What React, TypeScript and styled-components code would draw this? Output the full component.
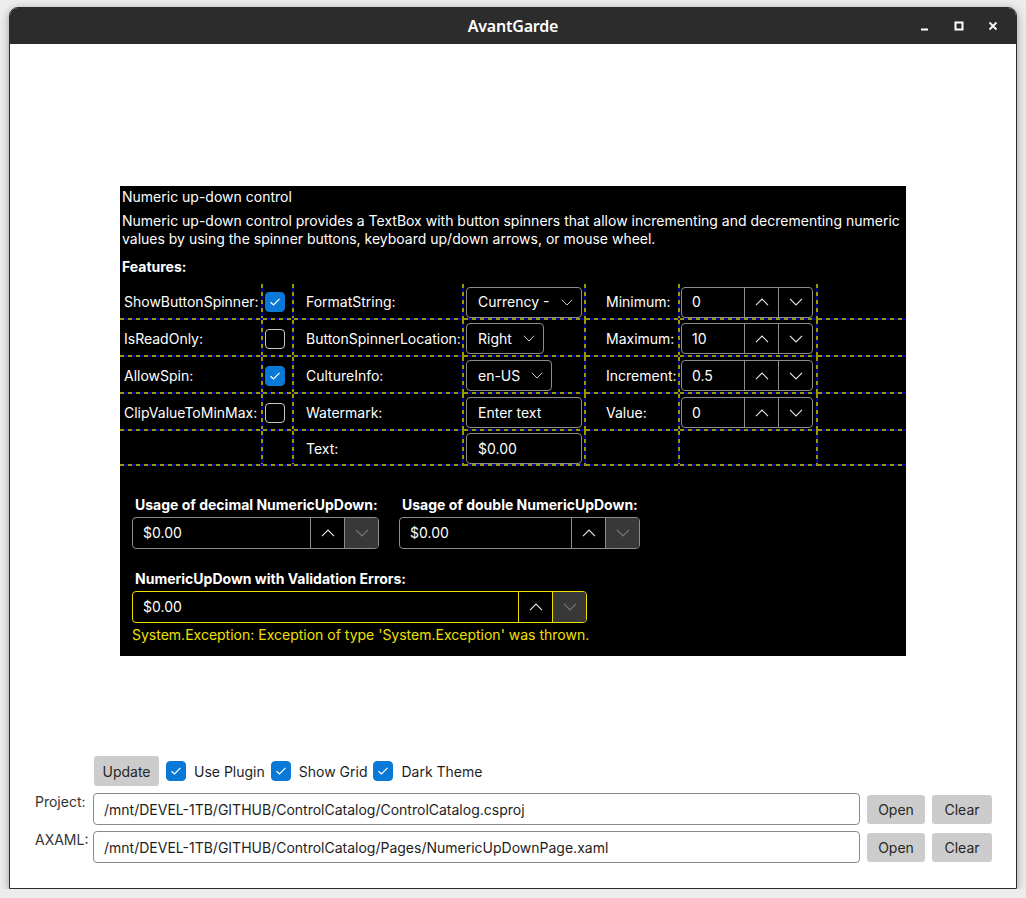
import React from "react";
import styled, { createGlobalStyle } from "styled-components";

const GlobalStyle = createGlobalStyle`
  html, body {
    margin: 0;
    padding: 0;
    background: #ececec;
  }
  body {
    font-family: Inter, "Noto Sans", sans-serif;
  }
`;

const YELLOW_LINE = "#9a9a00";
const BLUE_LINE = "#0000a0";

const Window = styled.div`
  margin: 7px 0 0 9px;
  width: 1008px;
  height: 882px;
  box-sizing: border-box;
  display: flex;
  flex-direction: column;
  border: 1px solid #2c2c2c;
  border-radius: 9px 9px 0 0;
  overflow: hidden;
  box-shadow: 0 2px 9px rgba(0, 0, 0, 0.35);
`;

const TitleBar = styled.div`
  height: 36px;
  flex: none;
  background: #2c2c2c;
  display: grid;
  grid-template-columns: 1fr auto 1fr;
  align-items: center;
`;

const Title = styled.div`
  grid-column: 2;
  color: #ffffff;
  font-family: "Noto Sans", sans-serif;
  font-weight: 600;
  font-size: 16px;
  letter-spacing: -0.2px;
`;

const WinControls = styled.div`
  grid-column: 3;
  justify-self: end;
  display: flex;
  align-items: center;
  padding-right: 6px;
`;

const WinButton = styled.div`
  width: 34px;
  height: 24px;
  display: flex;
  align-items: center;
  justify-content: center;
`;

const Content = styled.div`
  flex: 1;
  background: #ffffff;
  display: flex;
  flex-direction: column;
`;

const Preview = styled.div`
  flex: 1;
  display: flex;
  justify-content: center;
  align-items: flex-start;
  padding-top: 142px;
`;

const Panel = styled.div`
  width: 786px;
  height: 470px;
  background: #000000;
  color: #ffffff;
  font-size: 14px;
  line-height: 18px;
  box-sizing: border-box;
  padding-top: 2px;
`;

const Heading = styled.div`
  padding-left: 2px;
`;

const Description = styled.div`
  padding-left: 2px;
  margin-top: 6px;
`;

const FeaturesLabel = styled.div`
  padding-left: 2px;
  margin-top: 10px;
  font-weight: 700;
`;

const FeatureGrid = styled.div`
  margin-top: 8px;
  display: grid;
  grid-template-columns: 143px 31px 170px 122px 94px 138px 88px;
  grid-template-rows: 36px 37px 37px 37px 35px;
`;

const Cell = styled.div<{ $pl: number; $noRight?: boolean }>`
  display: flex;
  align-items: center;
  padding-left: ${(p) => p.$pl}px;
  white-space: nowrap;
  overflow: hidden;
  background:
    repeating-linear-gradient(90deg, ${YELLOW_LINE} 0 4px, ${BLUE_LINE} 4px 8px) left bottom / 100% 2px no-repeat
    ${(p) =>
      p.$noRight
        ? ""
        : `, repeating-linear-gradient(180deg, ${YELLOW_LINE} 0 4px, ${BLUE_LINE} 4px 8px) right top / 2px 100% no-repeat`};
`;

const CheckBoxBox = styled.div<{ $checked: boolean; $light?: boolean }>`
  width: 20px;
  height: 20px;
  box-sizing: border-box;
  border-radius: 4px;
  flex: none;
  display: flex;
  align-items: center;
  justify-content: center;
  background: ${(p) => (p.$checked ? "#0a78d6" : "transparent")};
  border: 1px solid
    ${(p) => (p.$checked ? "#0a78d6" : p.$light ? "#8a8a8a" : "#c8c8c8")};
`;

const ComboBox = styled.div<{ $w: number }>`
  width: ${(p) => p.$w}px;
  height: 31px;
  box-sizing: border-box;
  border: 1px solid #8c8c8c;
  border-radius: 4px;
  display: flex;
  align-items: center;
  padding-left: 11px;
  padding-right: 8px;
  gap: 8px;
`;

const ComboText = styled.span`
  flex: 1;
  overflow: hidden;
  white-space: nowrap;
`;

const TextBox = styled.div<{ $w: number }>`
  width: ${(p) => p.$w}px;
  height: 31px;
  box-sizing: border-box;
  border: 1px solid #8c8c8c;
  border-radius: 4px;
  display: flex;
  align-items: center;
  padding-left: 11px;
`;

const SpinBox = styled.div<{ $w: number; $h: number; $error?: boolean }>`
  width: ${(p) => p.$w}px;
  height: ${(p) => p.$h}px;
  box-sizing: border-box;
  border: 1px solid ${(p) => (p.$error ? "#efe000" : "#8c8c8c")};
  border-radius: 4px;
  display: flex;
  overflow: hidden;
`;

const SpinText = styled.div`
  flex: 1;
  display: flex;
  align-items: center;
  padding-left: 10px;
`;

const SpinButton = styled.div<{ $dim?: boolean; $error?: boolean }>`
  width: 33px;
  flex: none;
  border-left: 1px solid ${(p) => (p.$error ? "#efe000" : "#8c8c8c")};
  background: ${(p) => (p.$dim ? "#383838" : "transparent")};
  display: flex;
  align-items: center;
  justify-content: center;
`;

const Usage = styled.div`
  padding: 30px 0 0 12px;
`;

const UsageRow = styled.div`
  display: flex;
  gap: 20px;
`;

const Field = styled.div<{ $mt?: number }>`
  display: flex;
  flex-direction: column;
  margin-top: ${(p) => p.$mt ?? 0}px;
`;

const FieldLabel = styled.div`
  font-weight: 700;
  padding-left: 3px;
  margin-bottom: 3px;
`;

const ErrorText = styled.div`
  color: #efe000;
  margin-top: 3px;
`;

const Toolbar = styled.div`
  display: grid;
  grid-template-columns: 51px 1fr auto auto;
  column-gap: 7px;
  row-gap: 6px;
  padding: 0 24px 25px 25px;
  align-items: center;
  font-size: 14px;
  color: #1e1e1e;
`;

const ToolRow = styled.div`
  grid-column: 2 / 5;
  display: flex;
  align-items: center;
  margin-left: 1px;
  margin-bottom: 1px;
`;

const CheckOption = styled.div`
  display: flex;
  align-items: center;
  gap: 8px;
  margin-left: 7px;
  margin-right: -1px;
`;

const GreyButton = styled.div<{ $w: number; $h: number }>`
  width: ${(p) => p.$w}px;
  height: ${(p) => p.$h}px;
  background: #cccccc;
  border-radius: 3px;
  display: flex;
  align-items: center;
  justify-content: center;
  color: #262626;
`;

const PathLabel = styled.div`
  align-self: start;
  white-space: nowrap;
  color: #333333;
`;

const PathBox = styled.div`
  height: 32px;
  box-sizing: border-box;
  border: 1px solid #8a8a8a;
  border-radius: 4px;
  display: flex;
  align-items: center;
  padding-left: 10px;
  white-space: nowrap;
  overflow: hidden;
`;

const Chevron = ({ up, color, w = 14 }: { up?: boolean; color: string; w?: number }) => (
  <svg width={w} height={w / 2 + 1} viewBox="0 0 14 8" fill="none">
    <polyline
      points={up ? "1,7.2 7,1 13,7.2" : "1,0.8 7,7 13,0.8"}
      stroke={color}
      strokeWidth={1.1}
    />
  </svg>
);

const CheckBox = ({ checked, light }: { checked: boolean; light?: boolean }) => (
  <CheckBoxBox $checked={checked} $light={light}>
    {checked && (
      <svg width="12" height="10" viewBox="0 0 12 10" fill="none">
        <polyline points="1.5,5.2 4.5,8 10.5,1.8" stroke="#ffffff" strokeWidth={1.2} />
      </svg>
    )}
  </CheckBoxBox>
);

const Spinner = ({
  value,
  w,
  h,
  dimDown,
  error,
}: {
  value: string;
  w: number;
  h: number;
  dimDown?: boolean;
  error?: boolean;
}) => (
  <SpinBox $w={w} $h={h} $error={error}>
    <SpinText>{value}</SpinText>
    <SpinButton $error={error}>
      <Chevron up color="#e8e8e8" />
    </SpinButton>
    <SpinButton $error={error} $dim={dimDown}>
      <Chevron color={dimDown ? "#7a7a7a" : "#e8e8e8"} />
    </SpinButton>
  </SpinBox>
);

const Combo = ({ text, w }: { text: string; w: number }) => (
  <ComboBox $w={w}>
    <ComboText>{text}</ComboText>
    <Chevron color="#d8d8d8" w={12} />
  </ComboBox>
);

const App: React.FC = () => {
  return (
    <>
      <GlobalStyle />
      <Window>
        <TitleBar>
          <Title>AvantGarde</Title>
          <WinControls>
            <WinButton>
              <svg width="10" height="10" viewBox="0 0 10 10">
                <rect x="1" y="7.5" width="7" height="2" fill="#ffffff" />
              </svg>
            </WinButton>
            <WinButton>
              <svg width="10" height="10" viewBox="0 0 10 10">
                <rect x="1.5" y="1.5" width="7" height="7" fill="none" stroke="#ffffff" strokeWidth="2" />
              </svg>
            </WinButton>
            <WinButton>
              <svg width="10" height="10" viewBox="0 0 10 10">
                <path d="M1.5 1.5 L8.5 8.5 M8.5 1.5 L1.5 8.5" stroke="#ffffff" strokeWidth="1.8" />
              </svg>
            </WinButton>
          </WinControls>
        </TitleBar>
        <Content>
          <Preview>
            <Panel>
              <Heading>Numeric up-down control</Heading>
              <Description>
                Numeric up-down control provides a TextBox with button spinners that allow incrementing and decrementing numeric
                <br />
                values by using the spinner buttons, keyboard up/down arrows, or mouse wheel.
              </Description>
              <FeaturesLabel>Features:</FeaturesLabel>
              <FeatureGrid>
                <Cell $pl={4}>ShowButtonSpinner:</Cell>
                <Cell $pl={2}><CheckBox checked /></Cell>
                <Cell $pl={12}>FormatString:</Cell>
                <Cell $pl={2}><Combo text="Currency - C" w={116} /></Cell>
                <Cell $pl={20}>Minimum:</Cell>
                <Cell $pl={1}><Spinner value="0" w={132} h={31} /></Cell>
                <Cell $pl={0} $noRight />

                <Cell $pl={4}>IsReadOnly:</Cell>
                <Cell $pl={2}><CheckBox checked={false} /></Cell>
                <Cell $pl={12}>ButtonSpinnerLocation:</Cell>
                <Cell $pl={2}><Combo text="Right" w={78} /></Cell>
                <Cell $pl={20}>Maximum:</Cell>
                <Cell $pl={1}><Spinner value="10" w={132} h={31} /></Cell>
                <Cell $pl={0} $noRight />

                <Cell $pl={4}>AllowSpin:</Cell>
                <Cell $pl={2}><CheckBox checked /></Cell>
                <Cell $pl={12}>CultureInfo:</Cell>
                <Cell $pl={2}><Combo text="en-US" w={86} /></Cell>
                <Cell $pl={20}>Increment:</Cell>
                <Cell $pl={1}><Spinner value="0.5" w={132} h={31} /></Cell>
                <Cell $pl={0} $noRight />

                <Cell $pl={4}>ClipValueToMinMax:</Cell>
                <Cell $pl={2}><CheckBox checked={false} /></Cell>
                <Cell $pl={12}>Watermark:</Cell>
                <Cell $pl={2}><TextBox $w={116}>Enter text</TextBox></Cell>
                <Cell $pl={20}>Value:</Cell>
                <Cell $pl={1}><Spinner value="0" w={132} h={31} /></Cell>
                <Cell $pl={0} $noRight />

                <Cell $pl={4} />
                <Cell $pl={2} />
                <Cell $pl={12}>Text:</Cell>
                <Cell $pl={2}><TextBox $w={116}>$0.00</TextBox></Cell>
                <Cell $pl={20} />
                <Cell $pl={1} />
                <Cell $pl={0} $noRight />
              </FeatureGrid>
              <Usage>
                <UsageRow>
                  <Field>
                    <FieldLabel>Usage of decimal NumericUpDown:</FieldLabel>
                    <Spinner value="$0.00" w={247} h={32} dimDown />
                  </Field>
                  <Field>
                    <FieldLabel>Usage of double NumericUpDown:</FieldLabel>
                    <Spinner value="$0.00" w={241} h={32} dimDown />
                  </Field>
                </UsageRow>
                <Field $mt={21}>
                  <FieldLabel>NumericUpDown with Validation Errors:</FieldLabel>
                  <Spinner value="$0.00" w={455} h={32} dimDown error />
                  <ErrorText>System.Exception: Exception of type 'System.Exception' was thrown.</ErrorText>
                </Field>
              </Usage>
            </Panel>
          </Preview>
          <Toolbar>
            <span />
            <ToolRow>
              <GreyButton $w={65} $h={30}>Update</GreyButton>
              <CheckOption>
                <CheckBox checked light />
                <span>Use Plugin</span>
              </CheckOption>
              <CheckOption>
                <CheckBox checked light />
                <span>Show Grid</span>
              </CheckOption>
              <CheckOption>
                <CheckBox checked light />
                <span>Dark Theme</span>
              </CheckOption>
            </ToolRow>
            <PathLabel>Project:</PathLabel>
            <PathBox>/mnt/DEVEL-1TB/GITHUB/ControlCatalog/ControlCatalog.csproj</PathBox>
            <GreyButton $w={58} $h={29}>Open</GreyButton>
            <GreyButton $w={60} $h={29}>Clear</GreyButton>
            <PathLabel>AXAML:</PathLabel>
            <PathBox>/mnt/DEVEL-1TB/GITHUB/ControlCatalog/Pages/NumericUpDownPage.xaml</PathBox>
            <GreyButton $w={58} $h={29}>Open</GreyButton>
            <GreyButton $w={60} $h={29}>Clear</GreyButton>
          </Toolbar>
        </Content>
      </Window>
    </>
  );
};

export default App;
